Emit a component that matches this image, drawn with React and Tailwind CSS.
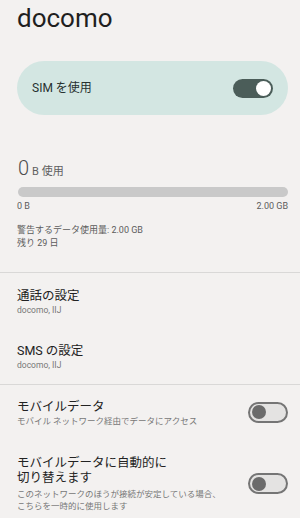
import React from 'react';

const font = { fontFamily: 'Roboto, "Noto Sans CJK JP", sans-serif' };

function ToggleOn() {
  return (
    <div className="w-[40px] h-[19px] rounded-full bg-[#4b5d59] flex items-center justify-end pr-[2px] shrink-0">
      <div className="w-[15px] h-[15px] rounded-full bg-white" />
    </div>
  );
}

function ToggleOff() {
  return (
    <div className="w-[40px] h-[21px] rounded-full bg-[#e4e3e2] border-2 border-[#757575] flex items-center pl-[2px] shrink-0">
      <div className="w-[14px] h-[14px] rounded-full bg-[#6b6b6b]" />
    </div>
  );
}

export default function App() {
  return (
    <div className="w-[300px] h-[518px] overflow-hidden bg-[#f3f1f0] text-[#1d1d1d]" style={font}>
      <div className="pl-[17px] pr-[12px]">
        {/* Header */}
        <div className="pt-[2px] h-[34px] text-[26px] leading-[32px] text-[#1f1f1f]">docomo</div>

        {/* SIM card */}
        <div className="mt-[27px] h-[54px] rounded-full bg-[#d3e6e2] flex items-center justify-between pl-[15px] pr-[15px]">
          <span className="text-[12px] text-[#273130]">SIM を使用</span>
          <ToggleOn />
        </div>

        {/* Usage */}
        <div className="mt-[41px] flex items-baseline gap-[3px] text-[#4d4d4d] leading-[24px]">
          <span className="text-[20px] font-light pl-[1px]">0</span>
          <span className="text-[11px] text-[#5f5f5f]">B 使用</span>
        </div>
        <div className="mt-[3px] h-[10px] rounded-full bg-[#c9c9c9] ml-[1px]" />
        <div className="mt-[3px] flex justify-between text-[9px] leading-[12px] text-[#5c5c5c]">
          <span>0 B</span>
          <span>2.00 GB</span>
        </div>
        <div className="mt-[12px] text-[9px] leading-[13px] text-[#5c5c5c]">
          <div>警告するデータ使用量: 2.00 GB</div>
          <div>残り 29 日</div>
        </div>
      </div>

      <div className="mt-[22px] h-px bg-[#d9d8d7]" />

      {/* Call / SMS */}
      <div className="pl-[17px] pr-[12px]">
        <div className="h-[56px] flex flex-col justify-center">
          <div className="text-[12.5px] leading-[17px] text-[#222]">通話の設定</div>
          <div className="text-[8.5px] leading-[12px] text-[#777]">docomo, IIJ</div>
        </div>
        <div className="h-[55px] flex flex-col justify-center">
          <div className="text-[12.5px] leading-[17px] text-[#222]">SMS の設定</div>
          <div className="text-[8.5px] leading-[12px] text-[#777]">docomo, IIJ</div>
        </div>
      </div>

      <div className="h-px bg-[#d9d8d7]" />

      {/* Mobile data */}
      <div className="pl-[17px] pr-[12px]">
        <div className="h-[54px] flex items-center justify-between">
          <div>
            <div className="text-[12.5px] leading-[17px] text-[#222]">モバイルデータ</div>
            <div className="text-[8.5px] leading-[12px] text-[#777]">モバイル ネットワーク経由でデータにアクセス</div>
          </div>
          <ToggleOff />
        </div>
        <div className="pt-[16px] flex items-center justify-between">
          <div>
            <div className="text-[12.5px] leading-[15px] text-[#222]">
              モバイルデータに自動的に
              <br />
              切り替えます
            </div>
            <div className="mt-[4px] text-[8.5px] leading-[11.5px] text-[#777]">
              このネットワークのほうが接続が安定している場合、
              <br />
              こちらを一時的に使用します
            </div>
          </div>
          <ToggleOff />
        </div>
      </div>
    </div>
  );
}
